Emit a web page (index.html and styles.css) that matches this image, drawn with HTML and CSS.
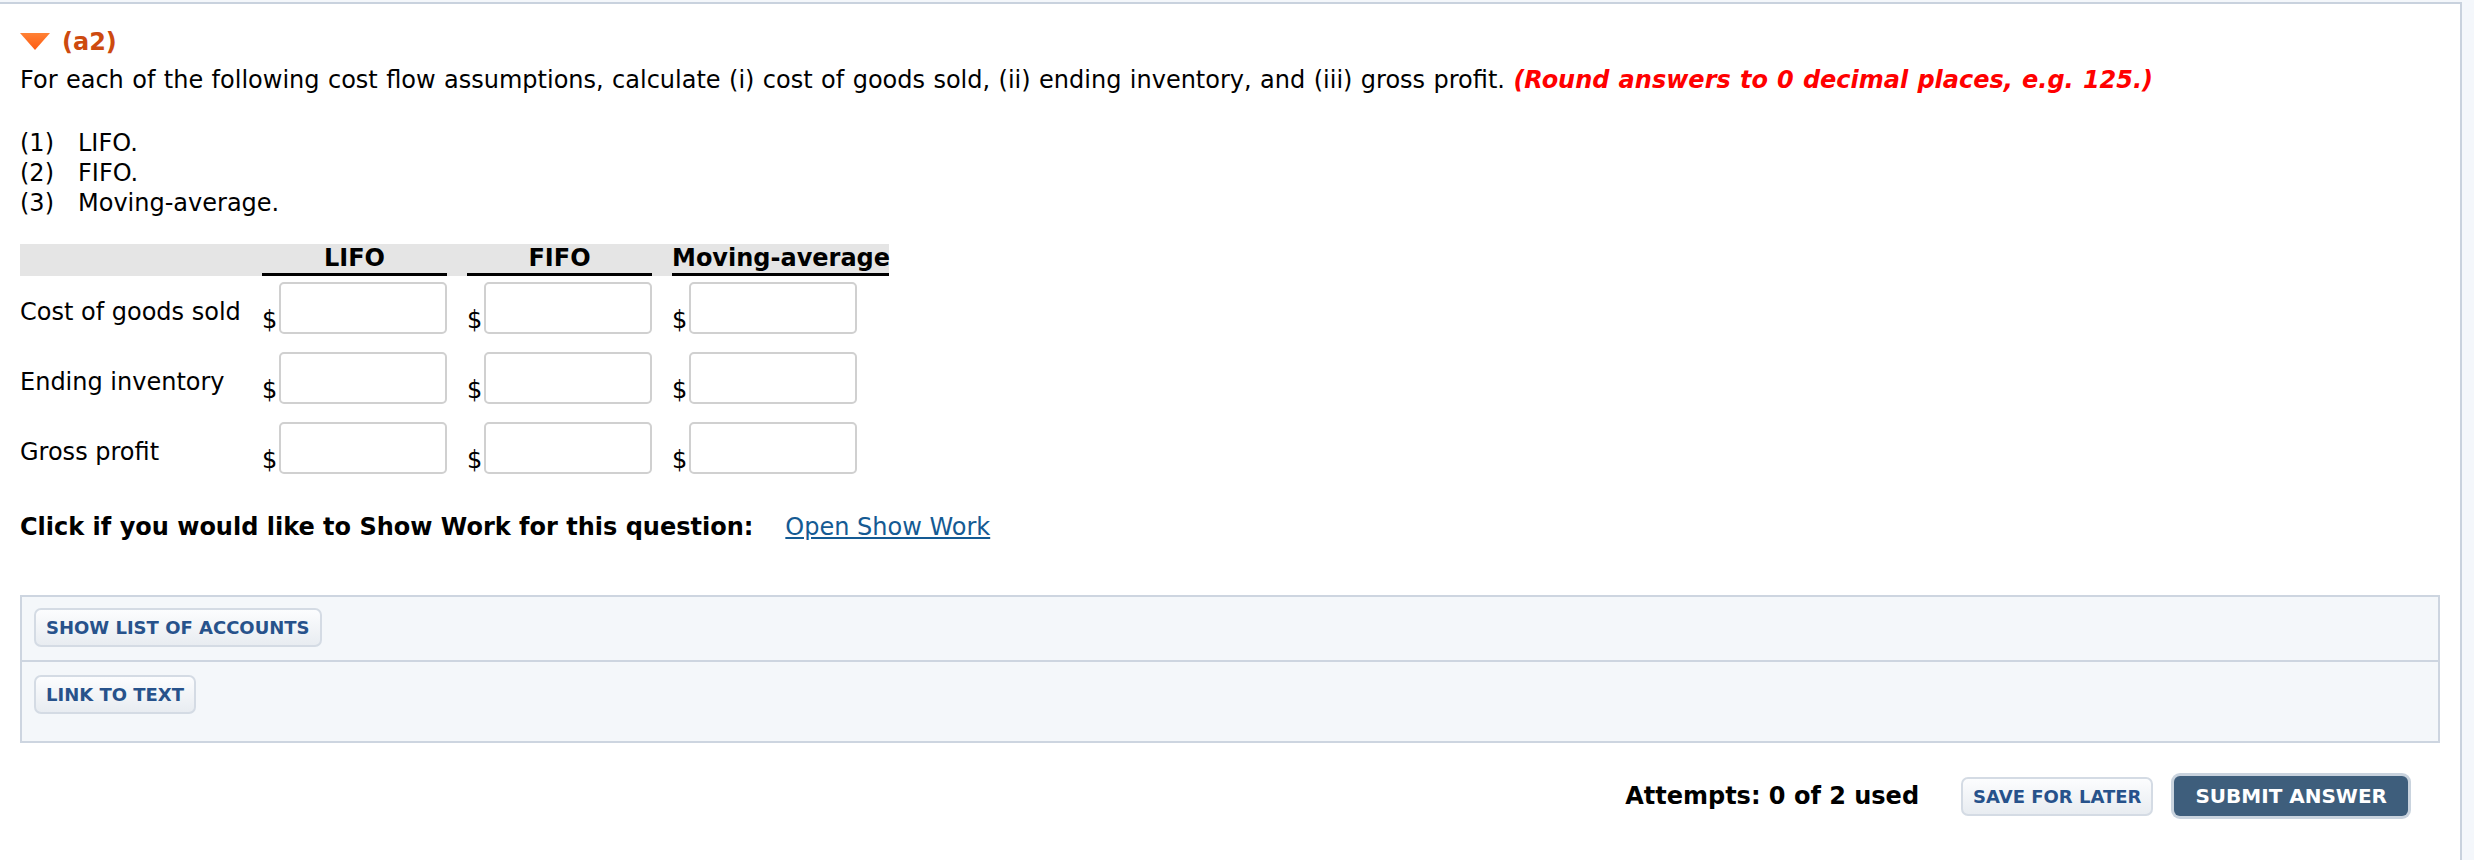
FILE: index.html
```html
<!DOCTYPE html>
<html lang="en">
<head>
<meta charset="utf-8">
<title>(a2) Cost flow assumptions</title>
<link rel="stylesheet" href="styles.css">
</head>
<body>
<div class="page">
  <div class="content">
    <div class="part-title">
      <svg class="caret" width="30" height="17" viewBox="0 0 30 17" aria-hidden="true">
        <defs>
          <linearGradient id="cg" x1="0" y1="0" x2="0" y2="1">
            <stop offset="0" stop-color="#ff8236"/>
            <stop offset="1" stop-color="#ff5a10"/>
          </linearGradient>
        </defs>
        <polygon points="0,0 30,0 15,17" fill="url(#cg)"/>
      </svg><span class="part-label">(a2)</span>
    </div>

    <p class="question">For each of the following cost flow assumptions, calculate (i) cost of goods sold, (ii) ending inventory, and (iii) gross profit. <em class="hint">(Round answers to 0 decimal places, e.g. 125.)</em></p>

    <ul class="methods">
      <li><span class="num">(1)</span>LIFO.</li>
      <li><span class="num">(2)</span>FIFO.</li>
      <li><span class="num">(3)</span>Moving-average.</li>
    </ul>

    <div class="answer-table">
      <div class="head-row">
        <div class="h-label"></div>
        <div class="h-col">LIFO</div>
        <div class="h-col">FIFO</div>
        <div class="h-col">Moving-average</div>
      </div>
      <div class="body-rows">
        <div class="row-label">Cost of goods sold</div>
        <div class="money"><span class="cur">$</span><input class="amount" type="text"></div>
        <div class="money"><span class="cur">$</span><input class="amount" type="text"></div>
        <div class="money"><span class="cur">$</span><input class="amount" type="text"></div>

        <div class="row-label">Ending inventory</div>
        <div class="money"><span class="cur">$</span><input class="amount" type="text"></div>
        <div class="money"><span class="cur">$</span><input class="amount" type="text"></div>
        <div class="money"><span class="cur">$</span><input class="amount" type="text"></div>

        <div class="row-label">Gross profit</div>
        <div class="money"><span class="cur">$</span><input class="amount" type="text"></div>
        <div class="money"><span class="cur">$</span><input class="amount" type="text"></div>
        <div class="money"><span class="cur">$</span><input class="amount" type="text"></div>
      </div>
    </div>

    <div class="showwork">
      <strong>Click if you would like to Show Work for this question:</strong><a class="sw-link" href="#">Open Show Work</a>
    </div>

    <div class="panel">
      <div class="panel-sec"><button class="btn" type="button">SHOW LIST OF ACCOUNTS</button></div>
      <div class="panel-sec last"><button class="btn" type="button">LINK TO TEXT</button></div>
    </div>

    <div class="footer">
      <span class="attempts">Attempts: 0 of 2 used</span>
      <button class="btn save" type="button">SAVE FOR LATER</button>
      <button class="btn-primary" type="button">SUBMIT ANSWER</button>
    </div>
  </div>
</div>
</body>
</html>
```

FILE: styles.css
```css
html, body {
  margin: 0;
  padding: 0;
}

body {
  background: #f4f7fb;
  font-family: "DejaVu Sans", Verdana, sans-serif;
  color: #000;
}

.page {
  box-sizing: border-box;
  width: 2462px;
  min-height: 858px;
  margin-top: 2px;
  background: #fff;
  border-top: 2px solid #c9d2de;
  border-right: 2px solid #c9d2de;
}

.content {
  padding: 23px 20px 0 20px;
}

/* title */
.part-title {
  font-size: 24px;
  line-height: 30px;
  font-weight: bold;
  color: #cd4a0f;
}

.caret {
  vertical-align: baseline;
  margin-right: 12px;
}

/* question */
.question {
  margin: 8px 0 0 0;
  font-size: 24px;
  line-height: 30px;
  word-spacing: 0.8px;
}

.hint {
  color: #ff0000;
  font-weight: bold;
  font-style: italic;
}

.methods {
  list-style: none;
  margin: 33px 0 0 0;
  padding: 0;
  font-size: 24px;
  line-height: 30px;
}

.num {
  display: inline-block;
  width: 58px;
}

/* table */
.answer-table {
  margin-top: 26px;
  width: 869px;
}

.head-row,
.body-rows {
  display: grid;
  grid-template-columns: 222px 185px 185px 217px;
  column-gap: 20px;
}

.head-row {
  background: #e5e5e5;
  height: 32px;
}

.h-col {
  box-sizing: border-box;
  height: 32px;
  border-bottom: 3px solid #000;
  text-align: center;
  font-size: 24px;
  font-weight: bold;
  line-height: 29px;
  white-space: nowrap;
}

.body-rows {
  margin-top: 6px;
  grid-auto-rows: 52px;
  row-gap: 18px;
}

.row-label {
  display: flex;
  align-items: center;
  padding-top: 7px;
  font-size: 24px;
  line-height: 30px;
  white-space: nowrap;
}

.money {
  display: flex;
  align-items: flex-end;
}

.cur {
  width: 17px;
  font-size: 24px;
  line-height: 24px;
  padding-bottom: 2px;
}

.amount {
  box-sizing: border-box;
  width: 168px;
  height: 52px;
  margin: 0;
  border: 2px solid #d0d0d0;
  border-radius: 5px;
  background: #fff;
  font-family: inherit;
  font-size: 22px;
}

/* show work */
.showwork {
  margin-top: 38px;
  font-size: 24px;
  line-height: 30px;
}

.sw-link {
  margin-left: 32px;
  color: #145a93;
  text-decoration: underline;
}

/* panel */
.panel {
  margin-top: 53px;
  border: 2px solid #cdd5e0;
  background: #f4f7fa;
}

.panel-sec {
  padding: 11px 12px 13px 12px;
}

.panel-sec.last {
  border-top: 2px solid #cdd5e0;
  padding-top: 13px;
  padding-bottom: 27px;
}

.btn {
  box-sizing: border-box;
  height: 39px;
  margin: 0;
  padding: 0 10px;
  border: 2px solid #d4dbe4;
  border-radius: 7px;
  background: linear-gradient(#fcfdfe, #e8ecf1);
  color: #27528b;
  font-family: "DejaVu Sans", Verdana, sans-serif;
  font-size: 18px;
  font-weight: bold;
  line-height: 35px;
  white-space: nowrap;
}

/* footer */
.footer {
  margin-top: 30px;
  padding-right: 29px;
  display: flex;
  justify-content: flex-end;
  align-items: center;
  height: 46px;
}

.attempts {
  font-size: 24px;
  font-weight: bold;
  margin-right: 42px;
}

.btn.save {
  margin-right: 21px;
}

.btn-primary {
  box-sizing: border-box;
  height: 40px;
  margin: 0 3px 0 0;
  padding: 0 21px;
  border: 0;
  border-radius: 6px;
  background: #3e5e7c;
  box-shadow: 0 0 0 3px #c9d3de;
  color: #fff;
  font-family: "DejaVu Sans", Verdana, sans-serif;
  font-size: 20px;
  font-weight: bold;
  line-height: 40px;
  white-space: nowrap;
}
```
